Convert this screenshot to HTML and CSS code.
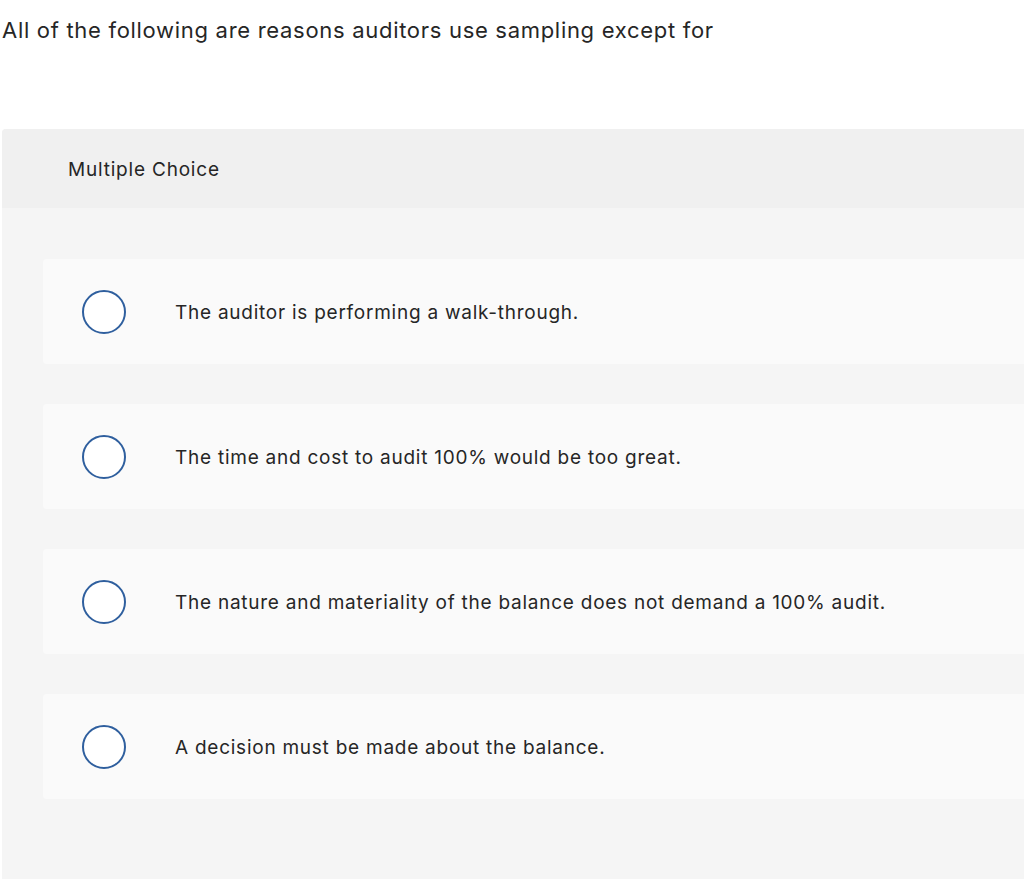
FILE: index.html
```html
<!DOCTYPE html>
<html lang="en">
<head>
<meta charset="utf-8">
<title>Multiple Choice</title>
<link rel="stylesheet" href="styles.css">
</head>
<body>
<main class="page">
  <p class="question">All of the following are reasons auditors use sampling except for</p>
  <section class="panel">
    <header class="panel-head">Multiple Choice</header>
    <div class="panel-body">
      <label class="option"><span class="radio"></span><span class="option-text">The auditor is performing a walk-through.</span></label>
      <label class="option"><span class="radio"></span><span class="option-text">The time and cost to audit 100% would be too great.</span></label>
      <label class="option"><span class="radio"></span><span class="option-text">The nature and materiality of the balance does not demand a 100% audit.</span></label>
      <label class="option"><span class="radio"></span><span class="option-text">A decision must be made about the balance.</span></label>
    </div>
  </section>
</main>
</body>
</html>
```
FILE: styles.css
```css
html, body {
  margin: 0;
  padding: 0;
  background: #ffffff;
}
body {
  font-family: Inter, "Open Sans", sans-serif;
  color: #262626;
  overflow: hidden;
}
.page {
  padding: 0 0 0 2px;
}
.question {
  margin: 0;
  padding-top: 16px;
  height: 129px;
  box-sizing: border-box;
  font-size: 22px;
  line-height: 28px;
  letter-spacing: 0.7px;
}
.panel {
  background: #f5f5f5;
  border-top-left-radius: 4px;
  overflow: hidden;
  min-height: 760px;
}
.panel-head {
  background: #f0f0f0;
  height: 79px;
  box-sizing: border-box;
  padding-top: 2px;
  display: flex;
  align-items: center;
  padding-left: 66px;
  font-size: 19px;
  letter-spacing: 0.8px;
}
.panel-body {
  display: flex;
  flex-direction: column;
  gap: 40px;
  padding: 51px 0 40px 41px;
}
.option {
  display: flex;
  align-items: center;
  height: 105px;
  box-sizing: border-box;
  padding-top: 2px;
  background: #fafafa;
  border-radius: 4px 0 0 4px;
  padding-left: 39px;
  font-size: 19px;
  letter-spacing: 0.75px;
}
.radio {
  flex: none;
  width: 44px;
  height: 44px;
  margin-top: -2px;
  box-sizing: border-box;
  border: 2px solid #2f5f9e;
  border-radius: 50%;
  background: #ffffff;
}
.option-text {
  margin-left: 49px;
}
```
